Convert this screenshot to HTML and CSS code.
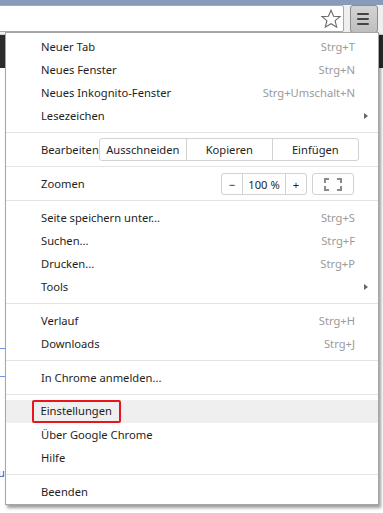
FILE: index.html
```html
<!DOCTYPE html>
<html lang="de">
<head>
<meta charset="utf-8">
<link rel="stylesheet" href="styles.css">
</head>
<body>
<div class="frame"></div>
<div class="toolbar">
  <div class="omnibox">
    <svg class="star" width="20" height="20" viewBox="0 0 20 20"><path d="M10 1.2 L12.6 7.2 L19 7.6 L14.1 11.7 L15.7 18.2 L10 14.7 L4.3 18.2 L5.9 11.7 L1 7.6 L7.4 7.2 Z" fill="#fff" stroke="#6a6a6a" stroke-width="1.1" stroke-linejoin="miter"/></svg>
  </div>
  <div class="menubtn">
    <span class="bar"></span><span class="bar"></span><span class="bar"></span>
  </div>
</div>
<div class="page">
  <div class="darkbar"></div>
  <div class="bluel first"></div>
  <div class="bluel second"></div>
  <div class="pagetext">ue</div>
</div>

<div class="menu">
  <div class="item"><span class="label">Neuer Tab</span><span class="key">Strg+T</span></div>
  <div class="item"><span class="label">Neues Fenster</span><span class="key">Strg+N</span></div>
  <div class="item"><span class="label">Neues Inkognito-Fenster</span><span class="key">Strg+Umschalt+N</span></div>
  <div class="item"><span class="label">Lesezeichen</span><span class="arrow"></span></div>
  <div class="sep"></div>
  <div class="item edit">
    <span class="label">Bearbeiten</span>
    <div class="group editgroup">
      <span class="seg cut">Ausschneiden</span>
      <span class="seg copy">Kopieren</span>
      <span class="seg paste">Einfügen</span>
    </div>
  </div>
  <div class="sep"></div>
  <div class="item zoom">
    <span class="label">Zoomen</span>
    <div class="group zoomgroup">
      <span class="seg minus">−</span>
      <span class="seg pct">100 %</span>
      <span class="seg plus">+</span>
    </div>
    <div class="group fullbtn">
      <svg width="18" height="13" viewBox="0 0 18 13"><path d="M1 5 V1 H5 M13 1 H17 V5 M17 8 V12 H13 M5 12 H1 V8" fill="none" stroke="#8a8a8a" stroke-width="2"/></svg>
    </div>
  </div>
  <div class="sep"></div>
  <div class="item"><span class="label">Seite speichern unter...</span><span class="key">Strg+S</span></div>
  <div class="item"><span class="label">Suchen...</span><span class="key">Strg+F</span></div>
  <div class="item"><span class="label">Drucken...</span><span class="key">Strg+P</span></div>
  <div class="item"><span class="label">Tools</span><span class="arrow"></span></div>
  <div class="sep"></div>
  <div class="item"><span class="label">Verlauf</span><span class="key">Strg+H</span></div>
  <div class="item"><span class="label">Downloads</span><span class="key">Strg+J</span></div>
  <div class="sep"></div>
  <div class="item"><span class="label">In Chrome anmelden...</span></div>
  <div class="sep"></div>
  <div class="item hover"><span class="label"><span class="mark">Einstellungen</span></span></div>
  <div class="item"><span class="label">Über Google Chrome</span></div>
  <div class="item"><span class="label">Hilfe</span></div>
  <div class="sep"></div>
  <div class="item"><span class="label">Beenden</span></div>
</div>
</body>
</html>
```

FILE: styles.css
```css
html, body {
  margin: 0;
  padding: 0;
  background: #fff;
}
body {
  width: 383px;
  height: 513px;
  overflow: hidden;
  position: relative;
  font-family: "Noto Sans", "Open Sans", sans-serif;
  font-size: 11.2px;
  color: #1e1e1e;
}
.frame {
  height: 5px;
  background: #869cb8;
}
.toolbar {
  height: 30px;
  background: #efefef;
  display: flex;
  align-items: flex-start;
  gap: 6px;
  box-sizing: border-box;
  border-bottom: 1px solid #d0d0d0;
}
.omnibox {
  flex: 1;
  margin-left: -3px;
  height: 27px;
  box-sizing: border-box;
  border: 1px solid #a9a9a9;
  border-radius: 0 2px 2px 0;
  background: #fff;
  display: flex;
  align-items: center;
  justify-content: flex-end;
  padding-right: 2px;
}
.star {
  display: block;
  margin-top: 1px;
}
.menubtn {
  width: 28px;
  height: 28px;
  margin-right: 5px;
  box-sizing: border-box;
  border: 1px solid #8c8c8c;
  border-radius: 3px;
  background: linear-gradient(#d3d3d3, #bfbfbf);
  display: flex;
  flex-direction: column;
  align-items: center;
  justify-content: center;
  gap: 2.5px;
  padding-right: 2px;
}
.menubtn .bar {
  display: block;
  width: 12px;
  height: 2.2px;
  border-radius: 1px;
  background: #444;
}
.page {
  display: flex;
  flex-direction: column;
}
.darkbar {
  height: 33px;
  background: #2c2c2c;
}
.bluel {
  width: 6px;
  height: 1px;
  background: #6a98e4;
}
.bluel.first { margin-top: 280px; }
.bluel.second { margin-top: 27px; }
.pagetext {
  margin-top: 89px;
  margin-left: -2px;
  font-size: 11px;
  line-height: 13px;
  color: #4b4bc8;
}

/* menu overlay */
.menu {
  position: absolute;
  left: 5px;
  top: 32px;
  width: 374px;
  height: 473px;
  box-sizing: border-box;
  border: 1px solid #a6a6a6;
  background: #fff;
  padding: 2px 0 1px;
  box-shadow: 2px 3px 3px rgba(0, 0, 0, 0.38);
}
.item {
  height: 23px;
  display: flex;
  align-items: center;
  padding: 0 23px 0 35px;
}
.item .label {
  flex: 1;
  white-space: nowrap;
}
.key {
  color: #9a9a9a;
}
.arrow {
  width: 0;
  height: 0;
  border-top: 3.5px solid transparent;
  border-bottom: 3.5px solid transparent;
  border-left: 4px solid #666;
  margin-right: -13px;
}
.sep {
  height: 1px;
  background: #e4e4e4;
  margin: 5px 0;
}
.item.hover {
  background: #efefef;
}
.mark {
  display: inline-block;
  box-sizing: border-box;
  height: 23px;
  line-height: 18px;
  border: 2.5px solid #e8151b;
  border-radius: 2px;
  padding: 0 7px 0 6.5px;
  margin-left: -9px;
}
.item.edit, .item.zoom {
  padding-right: 24px;
}
.group {
  display: flex;
  box-sizing: border-box;
  border: 1px solid #d2d2d2;
  border-radius: 3px;
  background: #fff;
}
.seg {
  display: flex;
  align-items: center;
  justify-content: center;
  border-left: 1px solid #d2d2d2;
}
.seg:first-child {
  border-left: none;
}
.editgroup {
  flex: 0 0 258px;
  height: 23px;
}
.cut { width: 86px; }
.copy { width: 85px; }
.paste { width: 85px; }
.zoomgroup {
  height: 22px;
  margin-top: 1px;
}
.minus { width: 20px; }
.pct { width: 42px; }
.plus { width: 20px; }
.fullbtn {
  width: 42px;
  height: 22px;
  margin-top: 1px;
  margin-left: 5px;
  align-items: center;
  justify-content: center;
}
.fullbtn svg { display: block; }
```
